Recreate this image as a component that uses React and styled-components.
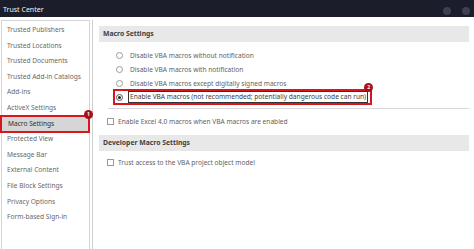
import styled, { createGlobalStyle } from 'styled-components';

const GlobalStyle = createGlobalStyle`
  *, *::before, *::after {
    box-sizing: border-box;
  }
  html, body {
    margin: 0;
    padding: 0;
    background: #ffffff;
  }
  body {
    font-family: "Noto Sans", "Open Sans", sans-serif;
    overflow: hidden;
  }
`;

const NAV_ITEMS = [
  'Trusted Publishers',
  'Trusted Locations',
  'Trusted Documents',
  'Trusted Add-in Catalogs',
  'Add-ins',
  'ActiveX Settings',
  'Macro Settings',
  'Protected View',
  'Message Bar',
  'External Content',
  'File Block Settings',
  'Privacy Options',
  'Form-based Sign-in',
];

const MACRO_OPTIONS = [
  'Disable VBA macros without notification',
  'Disable VBA macros with notification',
  'Disable VBA macros except digitally signed macros',
  'Enable VBA macros (not recommended; potentially dangerous code can run)',
];

export default function App() {
  return (
    <>
      <GlobalStyle />
      <Window>
        <TitleBar>
          <Title>Trust Center</Title>
          <WindowButtons>
            <WindowDot />
            <WindowDot />
          </WindowButtons>
        </TitleBar>

        <Body>
          <Sidebar>
            {NAV_ITEMS.map(item => (
              <NavItem key={item} $active={item === 'Macro Settings'}>
                {item}
                {item === 'Macro Settings' && <Badge $top={-7} $right={-5}>1</Badge>}
              </NavItem>
            ))}
          </Sidebar>

          <Main>
            <SectionHeader>Macro Settings</SectionHeader>

            <RadioList>
              {MACRO_OPTIONS.map((option, i) => {
                const selected = i === MACRO_OPTIONS.length - 1;
                return (
                  <RadioRow key={option} $selected={selected}>
                    <Radio $checked={selected} />
                    <OptionText $focused={selected}>{option}</OptionText>
                    {selected && <Badge $top={-8} $right={-3}>2</Badge>}
                  </RadioRow>
                );
              })}
            </RadioList>

            <Separator />

            <CheckRow>
              <Checkbox />
              <OptionText>Enable Excel 4.0 macros when VBA macros are enabled</OptionText>
            </CheckRow>

            <SectionHeader $spaced>Developer Macro Settings</SectionHeader>

            <CheckRow $tight>
              <Checkbox />
              <OptionText>Trust access to the VBA project object model</OptionText>
            </CheckRow>
          </Main>
        </Body>
      </Window>
    </>
  );
}

const Window = styled.div`
  display: flex;
  flex-direction: column;
  width: 474px;
  height: 249px;
  background: #ffffff;
`;

const TitleBar = styled.header`
  display: flex;
  align-items: center;
  justify-content: space-between;
  height: 17px;
  padding: 0 4px 0 3px;
  background: #1c1d2b;
`;

const Title = styled.span`
  color: #f2f2f2;
  font-size: 7px;
  margin-top: 2px;
`;

const WindowButtons = styled.div`
  display: flex;
  gap: 11px;
  margin-top: 4px;
`;

const WindowDot = styled.span`
  width: 8px;
  height: 8px;
  border-radius: 50%;
  background: #3e3f52;
`;

const Body = styled.div`
  flex: 1;
  display: flex;
  padding-top: 3px;
  min-height: 0;
`;

const Sidebar = styled.nav`
  display: flex;
  flex-direction: column;
  width: 89px;
  margin-left: 1px;
  padding-top: 1px;
  border: 1px solid #d4d4d4;
  border-bottom: none;
`;

const NavItem = styled.div`
  position: relative;
  height: 15.6px;
  line-height: 15.6px;
  padding-left: 5px;
  font-size: 6.6px;
  color: ${p => (p.$active ? '#2e2e2e' : '#676767')};
  white-space: nowrap;
  ${p =>
    p.$active &&
    `
    margin: -1px -1px -1.4px -2px;
    padding-left: 6px;
    height: 18px;
    line-height: 14px;
    background: #d6d6d6;
    border: 2px solid #d7161e;
  `}
`;

const Badge = styled.span`
  position: absolute;
  top: ${p => p.$top}px;
  right: ${p => p.$right}px;
  width: 9px;
  height: 9px;
  border-radius: 50%;
  background: #a5121b;
  color: #ffffff;
  font-size: 5px;
  font-weight: 700;
  line-height: 9px;
  text-align: center;
`;

const Main = styled.main`
  flex: 1;
  display: flex;
  flex-direction: column;
  margin-left: 2px;
  padding: 6px 5px 0 6px;
  border-left: 1px solid #cfcfcf;
`;

const SectionHeader = styled.div`
  height: 16px;
  line-height: 16px;
  padding-left: 4px;
  margin-top: ${p => (p.$spaced ? '7px' : '0')};
  background: #e8e8e8;
  font-size: 6.8px;
  font-weight: 700;
  color: #404040;
`;

const RadioList = styled.div`
  display: flex;
  flex-direction: column;
  align-items: flex-start;
  margin-top: 6px;
  padding-left: 14px;
`;

const RadioRow = styled.div`
  position: relative;
  display: flex;
  align-items: center;
  gap: 7px;
  height: 14px;
  padding: 0 3px;
  ${p =>
    p.$selected &&
    `
    gap: 5px;
    height: 16px;
    margin: -1px 0;
    padding: 0 2px 0 1px;
    border: 2px solid #d7161e;
  `}
`;

const Radio = styled.span`
  position: relative;
  width: 7px;
  height: 7px;
  border: 1px solid ${p => (p.$checked ? '#555' : '#9a9a9a')};
  border-radius: 50%;
  background: #fff;
  flex-shrink: 0;

  &::after {
    content: '';
    display: ${p => (p.$checked ? 'block' : 'none')};
    position: absolute;
    left: 1px;
    top: 1px;
    width: 3px;
    height: 3px;
    border-radius: 50%;
    background: #222;
  }
`;

const OptionText = styled.span`
  font-size: 6.6px;
  color: #626262;
  white-space: nowrap;
  ${p =>
    p.$focused &&
    `
    color: #3a3a3a;
    padding: 0 1px;
    line-height: 10px;
    border: 1px solid #333;
  `}
`;

const Separator = styled.div`
  height: 1px;
  margin: 4px 0 0 9px;
  background: #d8d8d8;
`;

const CheckRow = styled.div`
  display: flex;
  align-items: center;
  gap: 4px;
  height: 14px;
  margin-top: ${p => (p.$tight ? '4px' : '5px')};
  padding-left: 8px;
`;

const Checkbox = styled.span`
  width: 7px;
  height: 7px;
  border: 1px solid #9a9a9a;
  background: #fff;
  flex-shrink: 0;
`;
